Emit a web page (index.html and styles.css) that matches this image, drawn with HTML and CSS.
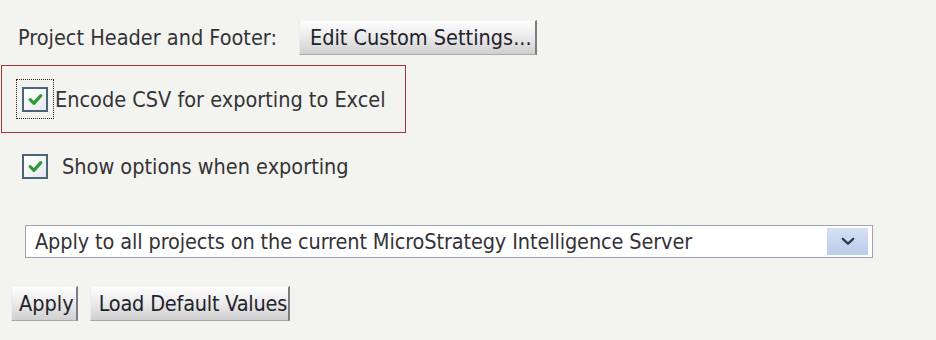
FILE: index.html
```html
<!DOCTYPE html>
<html>
<head>
<meta charset="utf-8">
<link rel="stylesheet" href="styles.css">
</head>
<body>
<div class="page">
  <div class="row header-row">
    <span class="label">Project Header and Footer:</span>
    <button class="btn btn-edit">Edit Custom Settings...</button>
  </div>
  <div class="highlight">
    <label class="check-row focused">
      <span class="focus-ring">
        <span class="checkbox">
          <svg viewBox="0 0 16 16" width="16" height="16"><path d="M3 8.2 L6.5 11.6 L13 4.4" fill="none" stroke="#2f9a32" stroke-width="3" stroke-linecap="round" stroke-linejoin="round"/></svg>
        </span>
      </span>
      <span class="check-text">Encode CSV for exporting to Excel</span>
    </label>
  </div>
  <label class="check-row second">
    <span class="checkbox">
      <svg viewBox="0 0 16 16" width="16" height="16"><path d="M3 8.2 L6.5 11.6 L13 4.4" fill="none" stroke="#2f9a32" stroke-width="3" stroke-linecap="round" stroke-linejoin="round"/></svg>
    </span>
    <span class="check-text">Show options when exporting</span>
  </label>
  <div class="select">
    <span class="select-text">Apply to all projects on the current MicroStrategy Intelligence Server</span>
    <span class="select-btn">
      <svg viewBox="0 0 16 10" width="14" height="9"><path d="M2 2 L8 7.5 L14 2" fill="none" stroke="#2b3a5c" stroke-width="2.6" stroke-linecap="round" stroke-linejoin="round"/></svg>
    </span>
  </div>
  <div class="row actions">
    <button class="btn btn-apply">Apply</button>
    <button class="btn btn-load">Load Default Values</button>
  </div>
</div>
</body>
</html>
```

FILE: styles.css
```css
html, body {
  margin: 0;
  padding: 0;
  background: #f3f3ef;
}
body {
  width: 936px;
  height: 340px;
  overflow: hidden;
  font-family: "DejaVu Sans Condensed", "DejaVu Sans", sans-serif;
  font-size: 21.5px;
  color: #333338;
}
.page {
  display: flex;
  flex-direction: column;
  padding: 20px 0 0 0;
}
.row {
  display: flex;
  align-items: center;
}
.header-row {
  padding-left: 18px;
  gap: 22px;
  height: 34px;
}
.btn {
  font-family: "DejaVu Sans Condensed", "DejaVu Sans", sans-serif;
  font-size: 21.5px;
  color: #22222a;
  height: 35px;
  padding: 0 6px;
  border: none;
  border-top: 1px solid #f4f4f4;
  border-left: 1px solid #ececec;
  border-right: 2px solid #7d7d80;
  border-bottom: 1px solid #a8a8a8;
  background: linear-gradient(#fdfdfd 0%, #ececec 45%, #cfcfcf 100%);
  border-radius: 0;
  display: flex;
  align-items: center;
  white-space: nowrap;
}
.btn-edit {
  padding-left: 10px;
  padding-right: 3px;
}
.highlight {
  margin: 11px 0 0 1px;
  width: 405px;
  height: 68px;
  border: 1px solid #a4343c;
  box-sizing: border-box;
  display: flex;
  align-items: center;
  padding-left: 14px;
}
.check-row {
  display: flex;
  align-items: center;
}
.focus-ring {
  display: flex;
  align-items: center;
  justify-content: center;
  width: 38px;
  height: 40px;
  box-sizing: border-box;
  border: 1px dotted #222;
  margin-right: 1px;
}
.checkbox {
  width: 26px;
  height: 25px;
  box-sizing: border-box;
  border: 2px solid #4c6478;
  background: linear-gradient(135deg, #ffffff 0%, #e6eaee 100%);
  display: flex;
  align-items: center;
  justify-content: center;
}
.checkbox svg {
  width: 17px;
  height: 17px;
}
.second {
  margin: 21px 0 0 22px;
  gap: 14px;
}
.select {
  margin: 46px 0 0 25px;
  width: 848px;
  height: 33px;
  box-sizing: border-box;
  border: 1px solid #9ea4b2;
  background: #fff;
  display: flex;
  align-items: center;
  justify-content: space-between;
  padding: 2px 4px 2px 9px;
}
.select-text {
  letter-spacing: -0.12px;
}
.select-btn {
  width: 41px;
  height: 27px;
  background: linear-gradient(#d6e0f4, #bccbea);
  display: flex;
  align-items: center;
  justify-content: center;
}
.actions {
  margin: 28px 0 0 11px;
  gap: 12px;
}
.btn-apply {
  padding-left: 7px;
  padding-right: 2px;
}
.btn-load {
  padding-left: 8px;
  padding-right: 1px;
  letter-spacing: -0.2px;
}
```
